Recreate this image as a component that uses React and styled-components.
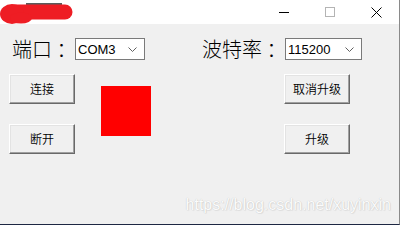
import React from "react";
import styled, { createGlobalStyle } from "styled-components";

const Global = createGlobalStyle`
  html, body { margin: 0; padding: 0; background: #f0f0f0; }
  * { box-sizing: border-box; }
`;

const Window = styled.div`
  position: relative;
  width: 400px;
  height: 225px;
  display: flex;
  flex-direction: column;
  background: #f0f0f0;
  border-right: 1px solid #8a8a8a;
  border-bottom: 1px solid #1d2742;
  overflow: hidden;
  font-family: "Noto Sans CJK SC", "Liberation Sans", sans-serif;
`;

const TitleBar = styled.div`
  height: 24px;
  flex: none;
  display: flex;
  align-items: stretch;
  background: #ffffff;
`;

const TitleMark = styled.svg`
  display: block;
  width: 76px;
  height: 24px;
`;

const Spacer = styled.div`
  flex: 1;
`;

const CaptionButton = styled.div`
  width: 46px;
  display: flex;
  align-items: center;
  justify-content: center;
`;

const Body = styled.div`
  flex: 1;
  display: flex;
  flex-direction: column;
  padding-top: 14px;
`;

const FieldRow = styled.div`
  display: flex;
  align-items: center;
  height: 22px;
`;

const Field = styled.div`
  display: flex;
  align-items: center;
  margin-left: ${(p) => p.$offset}px;
`;

const Label = styled.span`
  width: ${(p) => p.$width}px;
  font-size: 20px;
  font-weight: 300;
  line-height: 22px;
  color: #000;
  white-space: pre;
`;

const Select = styled.div`
  width: ${(p) => p.$width}px;
  height: 22px;
  display: flex;
  align-items: center;
  justify-content: space-between;
  padding: 0 7px 0 2px;
  background: #ffffff;
  border: 1px solid #7a7a7a;
  font-family: "Liberation Sans", Arial, sans-serif;
  font-size: 13px;
  color: #000;
`;

const Chevron = styled.svg`
  display: block;
  width: 9px;
  height: 5px;
`;

const Main = styled.div`
  display: flex;
  align-items: flex-start;
  margin-top: 14px;
`;

const ButtonColumn = styled.div`
  display: flex;
  flex-direction: column;
  gap: 20px;
  margin-left: ${(p) => p.$offset}px;
`;

const WinButton = styled.div`
  width: 66px;
  height: 30px;
  display: flex;
  align-items: center;
  justify-content: center;
  background: #f0f0f0;
  border-style: solid;
  border-width: 1px;
  border-color: #ffffff #696969 #696969 #ffffff;
  box-shadow: inset -1px -1px 0 #a0a0a0, inset 1px 1px 0 #e3e3e3;
  font-size: 12px;
  font-weight: 350;
  line-height: 14px;
  color: #000;
`;

const Indicator = styled.div`
  width: 50px;
  height: 50px;
  margin-left: 26px;
  margin-top: 12px;
  background: #ff0000;
`;

const Watermark = styled.div`
  position: absolute;
  right: 8px;
  bottom: 10px;
  font-family: "Liberation Sans", Arial, sans-serif;
  font-size: 16px;
  line-height: 18px;
  color: #fbfbfb;
  text-shadow: 0 0 1px rgba(0, 0, 0, 0.22), 1px 1px 1px rgba(0, 0, 0, 0.06);
  white-space: nowrap;
`;

function ComboBox({ width, value }) {
  return (
    <Select $width={width}>
      <span>{value}</span>
      <Chevron viewBox="0 0 9 5">
        <polyline points="0.5,0.5 4.5,4.5 8.5,0.5" fill="none" stroke="#606060" strokeWidth="1" />
      </Chevron>
    </Select>
  );
}

export default function App() {
  return (
    <>
      <Global />
      <Window>
        <TitleBar>
          <TitleMark viewBox="0 0 76 24">
            <rect x="26" y="3.2" width="36" height="1.6" fill="#333" />
            <path d="M14 12 L65 12" stroke="#ee1d24" strokeWidth="15" strokeLinecap="round" fill="none" />
            <ellipse cx="12" cy="14" rx="12" ry="10" fill="#ee1d24" />
            <ellipse cx="21" cy="18" rx="11" ry="5.5" fill="#ee1d24" />
          </TitleMark>
          <Spacer />
          <CaptionButton>
            <svg width="10" height="10" viewBox="0 0 10 10">
              <line x1="0" y1="5.5" x2="10" y2="5.5" stroke="#000" strokeWidth="1" />
            </svg>
          </CaptionButton>
          <CaptionButton>
            <svg width="10" height="10" viewBox="0 0 10 10">
              <rect x="0.5" y="0.5" width="9" height="9" fill="none" stroke="#b4b4b4" strokeWidth="1" />
            </svg>
          </CaptionButton>
          <CaptionButton>
            <svg width="11" height="11" viewBox="0 0 11 11">
              <path d="M0.5 0.5 L10.5 10.5 M10.5 0.5 L0.5 10.5" stroke="#000" strokeWidth="1" />
            </svg>
          </CaptionButton>
        </TitleBar>
        <Body>
          <FieldRow>
            <Field $offset={12}>
              <Label $width={63}>端口 ：</Label>
              <ComboBox width={70} value="COM3" />
            </Field>
            <Field $offset={57}>
              <Label $width={83}>波特率 ：</Label>
              <ComboBox width={77} value="115200" />
            </Field>
          </FieldRow>
          <Main>
            <ButtonColumn $offset={9}>
              <WinButton>连接</WinButton>
              <WinButton>断开</WinButton>
            </ButtonColumn>
            <Indicator />
            <ButtonColumn $offset={133}>
              <WinButton>取消升级</WinButton>
              <WinButton>升级</WinButton>
            </ButtonColumn>
          </Main>
        </Body>
        <Watermark>https://blog.csdn.net/xuyinxin</Watermark>
      </Window>
    </>
  );
}
